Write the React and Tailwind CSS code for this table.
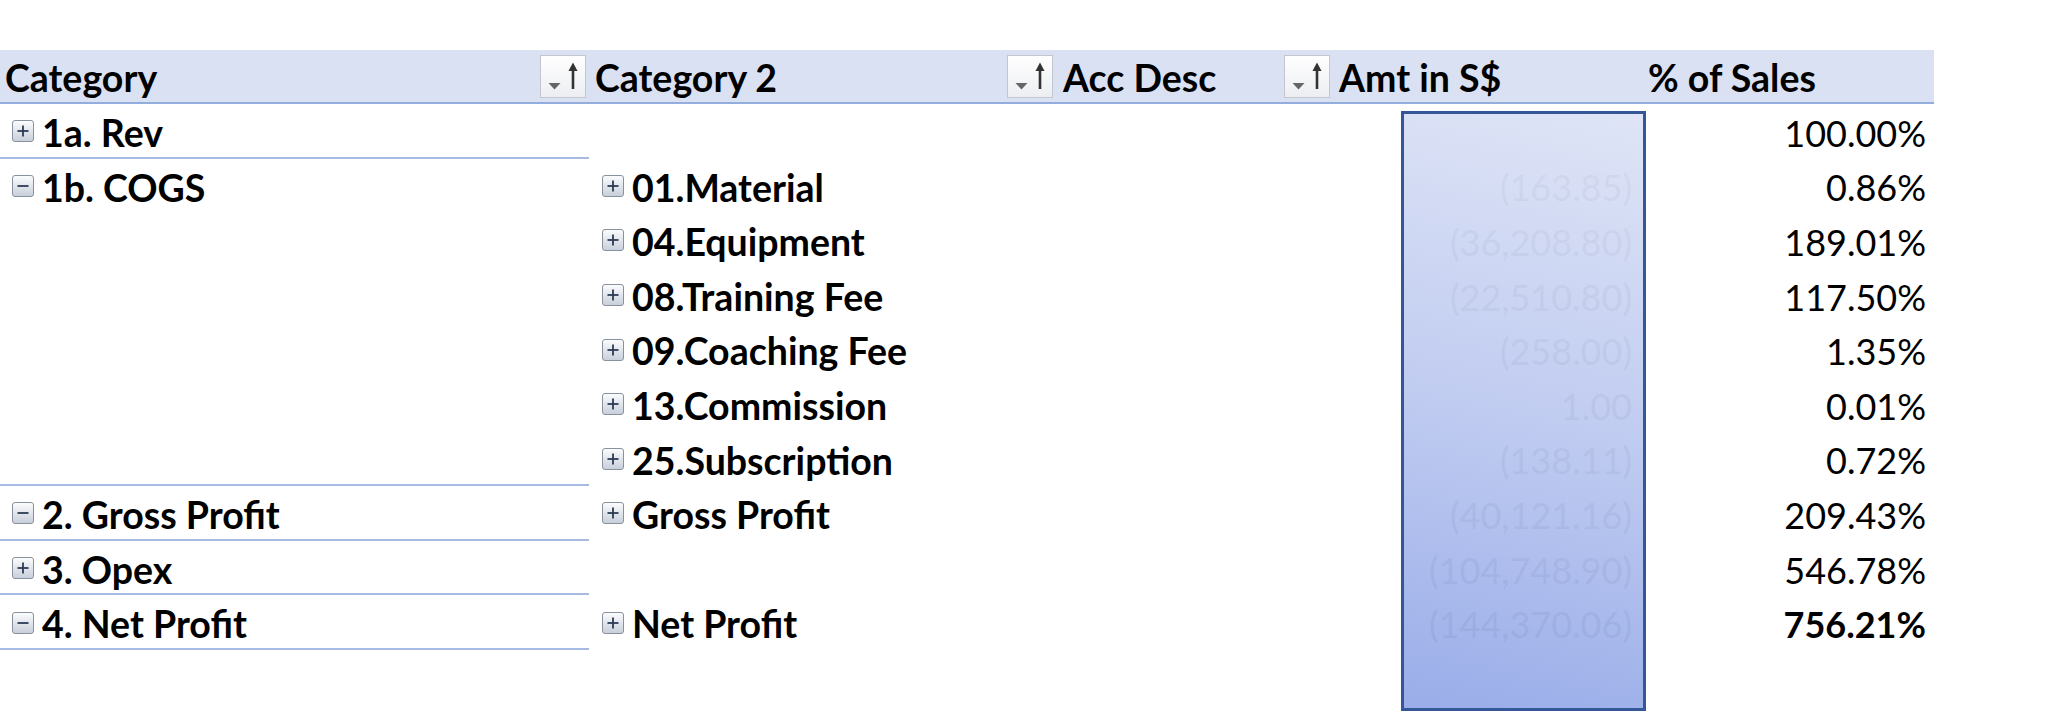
import React from 'react'

const groups = [
  { cat: '1a. Rev', open: false, rows: [{ c2: null, amt: '', pct: '100.00%' }] },
  {
    cat: '1b. COGS',
    open: true,
    rows: [
      { c2: '01.Material', amt: '(163.85)', pct: '0.86%' },
      { c2: '04.Equipment', amt: '(36,208.80)', pct: '189.01%' },
      { c2: '08.Training Fee', amt: '(22,510.80)', pct: '117.50%' },
      { c2: '09.Coaching Fee', amt: '(258.00)', pct: '1.35%' },
      { c2: '13.Commission', amt: '1.00', pct: '0.01%' },
      { c2: '25.Subscription', amt: '(138.11)', pct: '0.72%' },
    ],
  },
  { cat: '2. Gross Profit', open: true, rows: [{ c2: 'Gross Profit', amt: '(40,121.16)', pct: '209.43%' }] },
  { cat: '3. Opex', open: false, rows: [{ c2: null, amt: '(104,748.90)', pct: '546.78%' }] },
  { cat: '4. Net Profit', open: true, rows: [{ c2: 'Net Profit', amt: '(144,370.06)', pct: '756.21%', bold: true }] },
]

const Toggle = ({ open }) => (
  <span className="w-[22px] h-[22px] shrink-0 rounded-[3px] border border-[#8a919e] bg-linear-to-b from-[#fbfcfd] to-[#c9d0db] flex items-center justify-center">
    <svg width="14" height="14" viewBox="0 0 14 14">
      <path d="M1.5 7H12.5" stroke="#2c3a55" strokeWidth="1.8" />
      {!open && <path d="M7 1.5V12.5" stroke="#2c3a55" strokeWidth="1.8" />}
    </svg>
  </span>
)

const SortButton = () => (
  <span className="w-[46px] h-[43px] shrink-0 border border-[#c3c6cc] bg-linear-to-b from-white to-[#eceef2] flex items-center justify-center">
    <svg width="44" height="41" viewBox="0 0 44 41">
      <path d="M7.5 27H19.5L13.5 33.5Z" fill="#666" />
      <path d="M32 11V33" stroke="#333" strokeWidth="2.6" />
      <path d="M27.5 15L32 6.5L36.5 15Z" fill="#333" />
    </svg>
  </span>
)

export default function App() {
  return (
    <div
      className="w-[2048px] h-[727px] bg-white pt-[50px] text-black text-[36px] leading-none"
      style={{ fontFamily: 'Lato, "Open Sans", sans-serif' }}
    >
      <div className="relative w-[1934px]">
        {/* header */}
        <div className="flex h-[54px] bg-[#dae1f3] border-b-2 border-[#93aedc] font-bold text-[37.5px]">
          <div className="w-[589px] flex items-center justify-between pl-[5px] pr-[3px]">
            <span className="pt-[4px]">Category</span>
            <SortButton />
          </div>
          <div className="w-[466px] flex items-center justify-between pl-[6px] pr-[2px]">
            <span className="pt-[4px]">Category 2</span>
            <SortButton />
          </div>
          <div className="w-[277px] flex items-center justify-between pl-[8px] pr-[2px]">
            <span className="pt-[4px]">Acc Desc</span>
            <SortButton />
          </div>
          <div className="w-[312px] flex items-center pl-[7px] pt-[4px]">Amt in S$</div>
          <div className="w-[290px] flex items-center pl-[4px] pt-[4px]">% of Sales</div>
        </div>

        {/* body */}
        {groups.map((g) => (
          <div key={g.cat} className="flex">
            <div className="w-[589px] shrink-0 pl-[12px] shadow-[inset_0_-2px_0_#a6bae2]">
              <div className="h-[54.6px] flex items-center gap-[8px] font-bold text-[37.5px]">
                <Toggle open={g.open} />
                <span className="pt-[3px]">{g.cat}</span>
              </div>
            </div>
            <div className="flex flex-col">
              {g.rows.map((r, i) => (
                <div key={i} className="flex h-[54.6px] items-center">
                  <div className="w-[466px] pl-[13px]">
                    {r.c2 && (
                      <div className="flex items-center gap-[8px] font-bold text-[37.5px]">
                        <Toggle open={false} />
                        <span className="pt-[3px]">{r.c2}</span>
                      </div>
                    )}
                  </div>
                  <div className="w-[277px]" />
                  <div className="w-[312px] text-right pr-[12px] pt-[3px]">{r.amt}</div>
                  <div className={`w-[290px] text-right pr-[8px] pt-[3px] ${r.bold ? 'font-bold' : ''}`}>{r.pct}</div>
                </div>
              ))}
            </div>
          </div>
        ))}

        {/* redaction shape over amounts */}
        <div className="absolute left-[1401px] top-[61px] w-[245px] h-[600px] border-[3px] border-[#34579a] bg-[linear-gradient(12deg,rgba(150,170,232,0.965)_0%,rgba(190,202,240,0.965)_50%,rgba(222,228,246,0.97)_100%)]" />
      </div>
    </div>
  )
}
